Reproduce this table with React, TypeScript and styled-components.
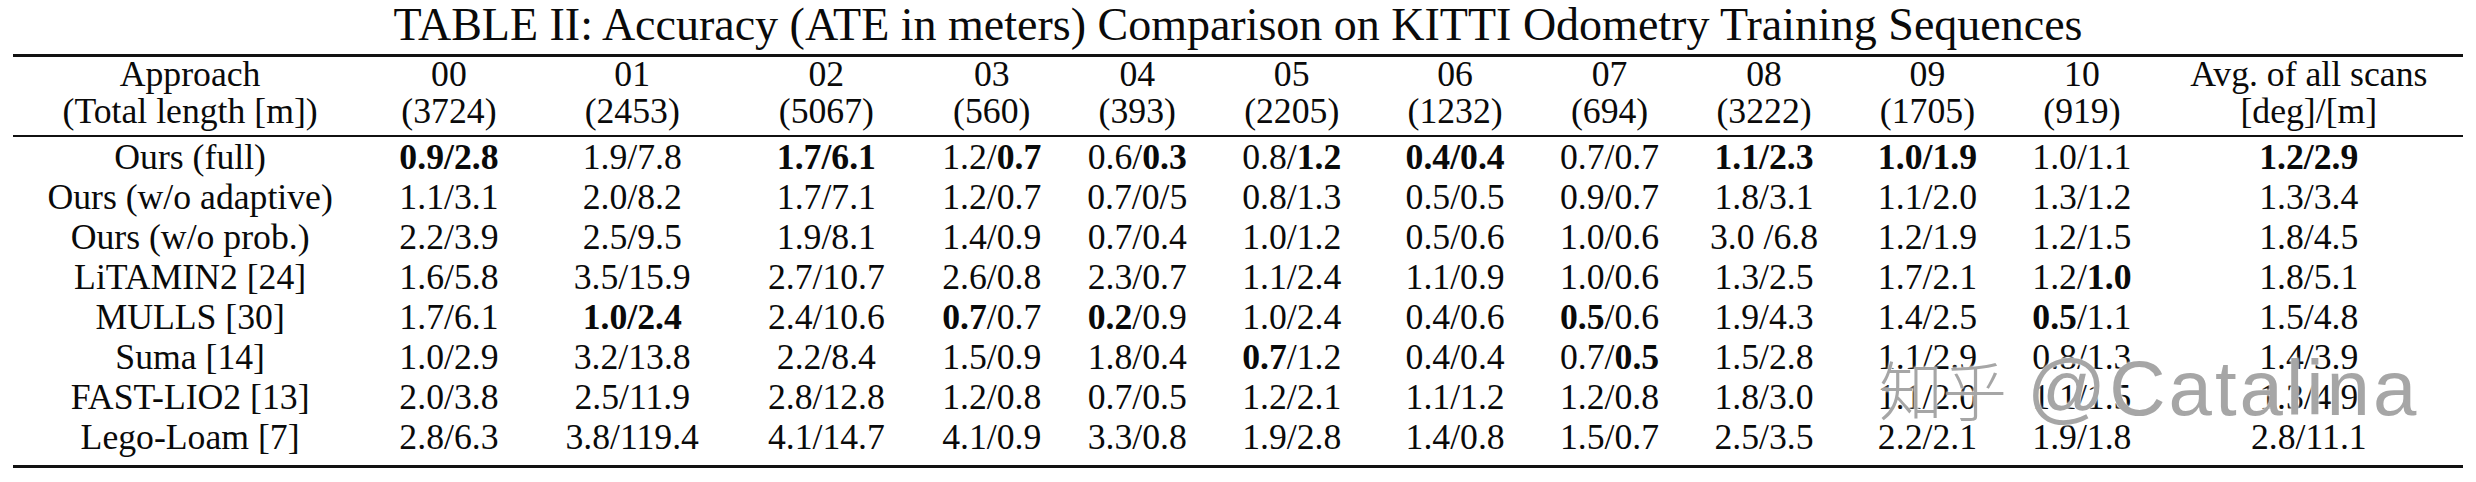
import React from "react";
import styled, { createGlobalStyle } from "styled-components";

const GlobalStyle = createGlobalStyle`
  html, body { margin: 0; padding: 0; background: #ffffff; }
  body { font-family: "Liberation Serif", "Times New Roman", serif; color: #0a0a0a; }
  table { font-family: "Liberation Serif", "Times New Roman", serif; color: #0a0a0a; }
`;

const Page = styled.div`
  position: relative;
  width: 2476px;
  height: 482px;
  padding: 0 13px;
  box-sizing: border-box;
  overflow: hidden;
`;

const Caption = styled.div`
  font-family: "Liberation Serif", "Times New Roman", serif;
  font-size: 46px;
  line-height: 50px;
  height: 50px;
  text-align: center;
  white-space: nowrap;
  margin-bottom: 4px;
`;

const Table = styled.table`
  width: 2450px;
  table-layout: fixed;
  border-collapse: separate;
  border-spacing: 0;
  border-top: 3px solid #111;
  border-bottom: 3px solid #111;
  font-family: "Liberation Serif", "Times New Roman", serif;
  font-size: 35.7px;
  color: #0a0a0a;
`;

const Col = styled.col<{ $w: number }>`
  width: ${(p) => p.$w}px;
`;

const HeadCell = styled.th<{ $first?: boolean; $last?: boolean }>`
  font-family: "Liberation Serif", "Times New Roman", serif;
  font-size: 35.7px;
  font-weight: normal;
  padding: ${(p) => (p.$last ? "0 0 4px" : "0")};
  line-height: ${(p) => (p.$first ? "34px" : "40px")};
  text-align: center;
  white-space: nowrap;
  border-bottom: ${(p) => (p.$last ? "2px solid #111" : "none")};
`;

const BodyCell = styled.td<{ $last?: boolean }>`
  font-family: "Liberation Serif", "Times New Roman", serif;
  font-size: 35.7px;
  padding: ${(p) => (p.$last ? "0 0 8px" : "0")};
  line-height: 40px;
  text-align: center;
  white-space: nowrap;
`;

const Bold = styled.b`
  font-weight: bold;
`;

const Watermark = styled.div`
  position: absolute;
  left: 1879px;
  top: 342px;
  display: flex;
  align-items: baseline;
  gap: 20px;
  color: rgba(150, 150, 150, 0.85);
  font-family: "Liberation Sans", Arial, sans-serif;
  font-size: 78px;
  line-height: 90px;
  letter-spacing: 3px;
  white-space: nowrap;
  text-shadow: 0 0 2px #ffffff, 0 0 3px #ffffff;
  pointer-events: none;
`;

const WatermarkCJK = styled.span`
  font-family: "Noto Sans CJK SC", sans-serif;
  font-size: 64px;
  font-weight: 300;
  letter-spacing: 0;
`;

const colWidths = [354.2, 163.4, 203.1, 185.2, 145.5, 145.5, 163.4, 163.4, 145.5, 163.4, 163.4, 145.5, 308.2];

const seqs = ["00", "01", "02", "03", "04", "05", "06", "07", "08", "09", "10"];
const lengths = ["3724", "2453", "5067", "560", "393", "2205", "1232", "694", "3222", "1705", "919"];

const rows: [string, string[]][] = [
  ["Ours (full)", ["**0.9/2.8**", "1.9/7.8", "**1.7/6.1**", "1.2/**0.7", "0.6/**0.3", "0.8/**1.2", "**0.4/0.4**", "0.7/0.7", "**1.1/2.3**", "**1.0/1.9**", "1.0/1.1", "**1.2/2.9**"]],
  ["Ours (w/o adaptive)", ["1.1/3.1", "2.0/8.2", "1.7/7.1", "1.2/0.7", "0.7/0/5", "0.8/1.3", "0.5/0.5", "0.9/0.7", "1.8/3.1", "1.1/2.0", "1.3/1.2", "1.3/3.4"]],
  ["Ours (w/o prob.)", ["2.2/3.9", "2.5/9.5", "1.9/8.1", "1.4/0.9", "0.7/0.4", "1.0/1.2", "0.5/0.6", "1.0/0.6", "3.0 /6.8", "1.2/1.9", "1.2/1.5", "1.8/4.5"]],
  ["LiTAMIN2 [24]", ["1.6/5.8", "3.5/15.9", "2.7/10.7", "2.6/0.8", "2.3/0.7", "1.1/2.4", "1.1/0.9", "1.0/0.6", "1.3/2.5", "1.7/2.1", "1.2/**1.0", "1.8/5.1"]],
  ["MULLS [30]", ["1.7/6.1", "**1.0/2.4**", "2.4/10.6", "0.7**/0.7", "0.2**/0.9", "1.0/2.4", "0.4/0.6", "0.5**/0.6", "1.9/4.3", "1.4/2.5", "0.5**/1.1", "1.5/4.8"]],
  ["Suma [14]", ["1.0/2.9", "3.2/13.8", "2.2/8.4", "1.5/0.9", "1.8/0.4", "0.7**/1.2", "0.4/0.4", "0.7/**0.5", "1.5/2.8", "1.1/2.9", "0.8/1.3", "1.4/3.9"]],
  ["FAST-LIO2 [13]", ["2.0/3.8", "2.5/11.9", "2.8/12.8", "1.2/0.8", "0.7/0.5", "1.2/2.1", "1.1/1.2", "1.2/0.8", "1.8/3.0", "1.1/2.0", "1.1/1.5", "1.3/4.9"]],
  ["Lego-Loam [7]", ["2.8/6.3", "3.8/119.4", "4.1/14.7", "4.1/0.9", "3.3/0.8", "1.9/2.8", "1.4/0.8", "1.5/0.7", "2.5/3.5", "2.2/2.1", "1.9/1.8", "2.8/11.1"]],
];

// "**a/b**" = all bold, "a**/b" = first bold, "a/**b" = second bold
function renderValue(v: string) {
  if (v.startsWith("**") && v.endsWith("**")) return <Bold>{v.slice(2, -2)}</Bold>;
  const i = v.indexOf("**/");
  if (i >= 0) {
    return (
      <>
        <Bold>{v.slice(0, i)}</Bold>
        {v.slice(i + 2)}
      </>
    );
  }
  const j = v.indexOf("/**");
  if (j >= 0) {
    return (
      <>
        {v.slice(0, j + 1)}
        <Bold>{v.slice(j + 3)}</Bold>
      </>
    );
  }
  return v;
}

export default function App() {
  return (
    <>
      <GlobalStyle />
      <Page>
        <Caption>TABLE II: Accuracy (ATE in meters) Comparison on KITTI Odometry Training Sequences</Caption>
        <Table>
          <colgroup>
            {colWidths.map((w, i) => (
              <Col key={i} $w={w} />
            ))}
          </colgroup>
          <thead>
            <tr>
              <HeadCell $first>Approach</HeadCell>
              {seqs.map((s) => (
                <HeadCell key={s} $first>
                  {s}
                </HeadCell>
              ))}
              <HeadCell $first>Avg. of all scans</HeadCell>
            </tr>
            <tr>
              <HeadCell $last>(Total length [m])</HeadCell>
              {lengths.map((l) => (
                <HeadCell key={l} $last>
                  ({l})
                </HeadCell>
              ))}
              <HeadCell $last>[deg]/[m]</HeadCell>
            </tr>
          </thead>
          <tbody>
            {rows.map(([name, vals], ri) => (
              <tr key={name}>
                <BodyCell $last={ri === rows.length - 1}>{name}</BodyCell>
                {vals.map((v, ci) => (
                  <BodyCell key={ci} $last={ri === rows.length - 1}>
                    {renderValue(v)}
                  </BodyCell>
                ))}
              </tr>
            ))}
          </tbody>
        </Table>
        <Watermark>
          <WatermarkCJK>知乎</WatermarkCJK>
          <span>@Catalina</span>
        </Watermark>
      </Page>
    </>
  );
}
